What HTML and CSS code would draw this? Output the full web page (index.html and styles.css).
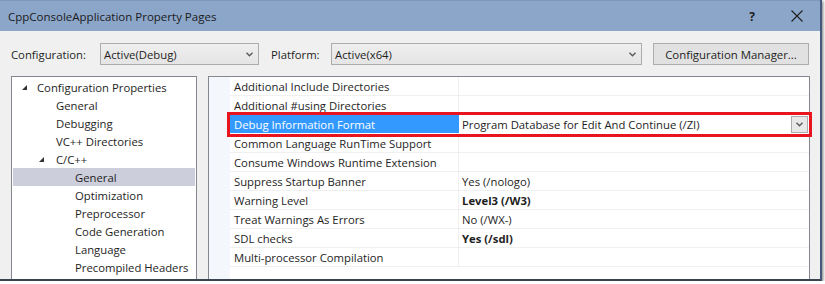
FILE: index.html
```html
<!DOCTYPE html>
<html lang="en">
<head>
    <meta charset="UTF-8">
    <title>CppConsoleApplication Property Pages</title>
    <link rel="stylesheet" href="styles.css">
</head>
<body>
    <div class="window">
        <div class="titlebar">
            <span class="title">CppConsoleApplication Property Pages</span>
            <span class="help">?</span>
            <svg class="close" width="12" height="12" viewBox="0 0 12 12">
                <path d="M0.5 0.5 L11.5 11.5 M11.5 0.5 L0.5 11.5" stroke="#1e1e1e" stroke-width="1.1" fill="none"/>
            </svg>
        </div>

        <div class="toolbar">
            <span class="tb-label cfg-label">Configuration:</span>
            <div class="combo cfg-combo">
                <span class="combo-text">Active(Debug)</span>
                <svg class="chevron" width="7" height="5" viewBox="0 0 7 5"><path d="M0.5 0.8 L3.5 3.8 L6.5 0.8" stroke="#5a5a5a" stroke-width="1.4" fill="none"/></svg>
            </div>
            <span class="tb-label plat-label">Platform:</span>
            <div class="combo plat-combo">
                <span class="combo-text">Active(x64)</span>
                <svg class="chevron" width="7" height="5" viewBox="0 0 7 5"><path d="M0.5 0.8 L3.5 3.8 L6.5 0.8" stroke="#5a5a5a" stroke-width="1.4" fill="none"/></svg>
            </div>
            <button class="cfg-manager">Configuration Manager...</button>
        </div>

        <div class="panes">
            <ul class="tree">
                <li class="node root"><svg class="twisty" width="5" height="5" viewBox="0 0 5 5"><path d="M5 0 L5 5 L0 5 Z" fill="#333"/></svg>Configuration Properties</li>
                <li class="node lvl1">General</li>
                <li class="node lvl1">Debugging</li>
                <li class="node lvl1">VC++ Directories</li>
                <li class="node branch"><svg class="twisty" width="5" height="5" viewBox="0 0 5 5"><path d="M5 0 L5 5 L0 5 Z" fill="#333"/></svg>C/C++</li>
                <li class="node lvl2 selected">General</li>
                <li class="node lvl2">Optimization</li>
                <li class="node lvl2">Preprocessor</li>
                <li class="node lvl2">Code Generation</li>
                <li class="node lvl2">Language</li>
                <li class="node lvl2">Precompiled Headers</li>
            </ul>

            <div class="grid">
                <div class="row"><div class="name">Additional Include Directories</div><div class="value"></div></div>
                <div class="row"><div class="name">Additional #using Directories</div><div class="value"></div></div>
                <div class="row active">
                    <div class="name">Debug Information Format</div>
                    <div class="value">
                        <span>Program Database for Edit And Continue (/ZI)</span>
                        <span class="drop-btn"><svg width="7" height="5" viewBox="0 0 7 5"><path d="M0.5 0.8 L3.5 3.8 L6.5 0.8" stroke="#5a5a5a" stroke-width="1.4" fill="none"/></svg></span>
                    </div>
                </div>
                <div class="row"><div class="name">Common Language RunTime Support</div><div class="value"></div></div>
                <div class="row"><div class="name">Consume Windows Runtime Extension</div><div class="value"></div></div>
                <div class="row"><div class="name">Suppress Startup Banner</div><div class="value">Yes (/nologo)</div></div>
                <div class="row"><div class="name">Warning Level</div><div class="value bold">Level3 (/W3)</div></div>
                <div class="row"><div class="name">Treat Warnings As Errors</div><div class="value">No (/WX-)</div></div>
                <div class="row"><div class="name">SDL checks</div><div class="value bold">Yes (/sdl)</div></div>
                <div class="row"><div class="name">Multi-processor Compilation</div><div class="value"></div></div>
            </div>
        </div>
    </div>
</body>
</html>
```

FILE: styles.css
```css
body {
    margin: 0;
    background-color: #fff;
    font-family: "Open Sans", "Noto Sans", sans-serif;
    font-size: 11.3px;
    color: #1e1e1e;
    white-space: nowrap;
}
.window {
    width: 820px;
    height: 279px;
    background-color: #f0f0f0;
    border-right: 2px solid #44597c;
    border-bottom: 2px solid #3c4350;
    box-shadow: 1px 1px 3px rgba(0, 0, 0, 0.55);
    display: flex;
    flex-direction: column;
    overflow: hidden;
}
.titlebar {
    height: 31px;
    flex: none;
    background-color: #8ca6c9;
    border-top: 1px solid #7d96b9;
    box-sizing: border-box;
    display: flex;
    align-items: center;
    padding-left: 8px;
}
.title {
    font-size: 11.5px;
    color: #1a1a1a;
    flex: 1;
}
.help {
    font-weight: bold;
    font-size: 12px;
    color: #1e1e1e;
    margin-right: 36px;
}
.close {
    margin-right: 17px;
}

/* configuration / platform row */
.toolbar {
    display: flex;
    align-items: center;
    padding: 12px 0 0 11px;
    height: 22px;
    flex: none;
}
.cfg-label {
    width: 89px;
}
.plat-label {
    width: 60px;
    margin-left: 12px;
}
.combo {
    height: 22px;
    box-sizing: border-box;
    border: 1px solid #acacac;
    background: linear-gradient(#efefef, #e5e5e5);
    display: flex;
    align-items: center;
    padding: 0 4px 0 3px;
}
.combo-text {
    flex: 1;
}
.chevron {
    margin-right: 1px;
}
.cfg-combo {
    width: 159px;
}
.plat-combo {
    width: 311px;
}
.cfg-manager {
    margin-left: 11px;
    width: 156px;
    height: 22px;
    border: 1px solid #adadad;
    background-color: #e1e1e1;
    font-family: inherit;
    font-size: 11.4px;
    color: #1e1e1e;
    padding: 0;
}

/* tree + grid */
.panes {
    display: flex;
    margin-top: 11px;
    padding-left: 11px;
    flex: 1;
}
.tree {
    list-style: none;
    margin: 0;
    padding: 0;
    width: 184px;
    height: 240px;
    background-color: #fff;
    border: 1px solid #828790;
}
.node {
    height: 18px;
    display: flex;
    align-items: center;
    margin: 0 1px;
}
.twisty {
    flex: none;
}
.root {
    padding-left: 9px;
    margin-top: 1px;
}
.root .twisty {
    margin-right: 10px;
}
.branch {
    padding-left: 26px;
}
.branch .twisty {
    margin-right: 12px;
}
.lvl1 {
    padding-left: 43px;
}
.lvl2 {
    padding-left: 62px;
}
.node.selected {
    background-color: #cccedb;
}

.grid {
    margin-left: 11px;
    height: 240px;
    border: 1px solid #828790;
    background: linear-gradient(to right, #f4f7fc 21px, #fff 21px);
    padding-left: 21px;
    width: 579px;
}
.row {
    display: flex;
    height: 19px;
    box-sizing: border-box;
    border-bottom: 1px solid #f0f0f0;
    background-color: #fff;
}
.row .name {
    width: 229px;
    padding-left: 4px;
    box-sizing: border-box;
    border-right: 1px solid #f0f0f0;
    display: flex;
    align-items: center;
}
.row .value {
    flex: 1;
    padding-left: 3px;
    display: flex;
    align-items: center;
}
.value.bold {
    font-weight: bold;
}
.row.active {
    border-bottom-color: #fff;
    outline: 3px solid #e8141e;
    position: relative;
    z-index: 1;
}
.row.active .name {
    background-color: #3399ff;
    color: #fff;
    border-right: none;
}
.row.active .value span:first-child {
    flex: 1;
}
.drop-btn {
    width: 15px;
    height: 15px;
    margin-right: 1px;
    border: 1px solid #acacac;
    background-color: #e8e8e8;
    display: flex;
    align-items: center;
    justify-content: center;
}
```
